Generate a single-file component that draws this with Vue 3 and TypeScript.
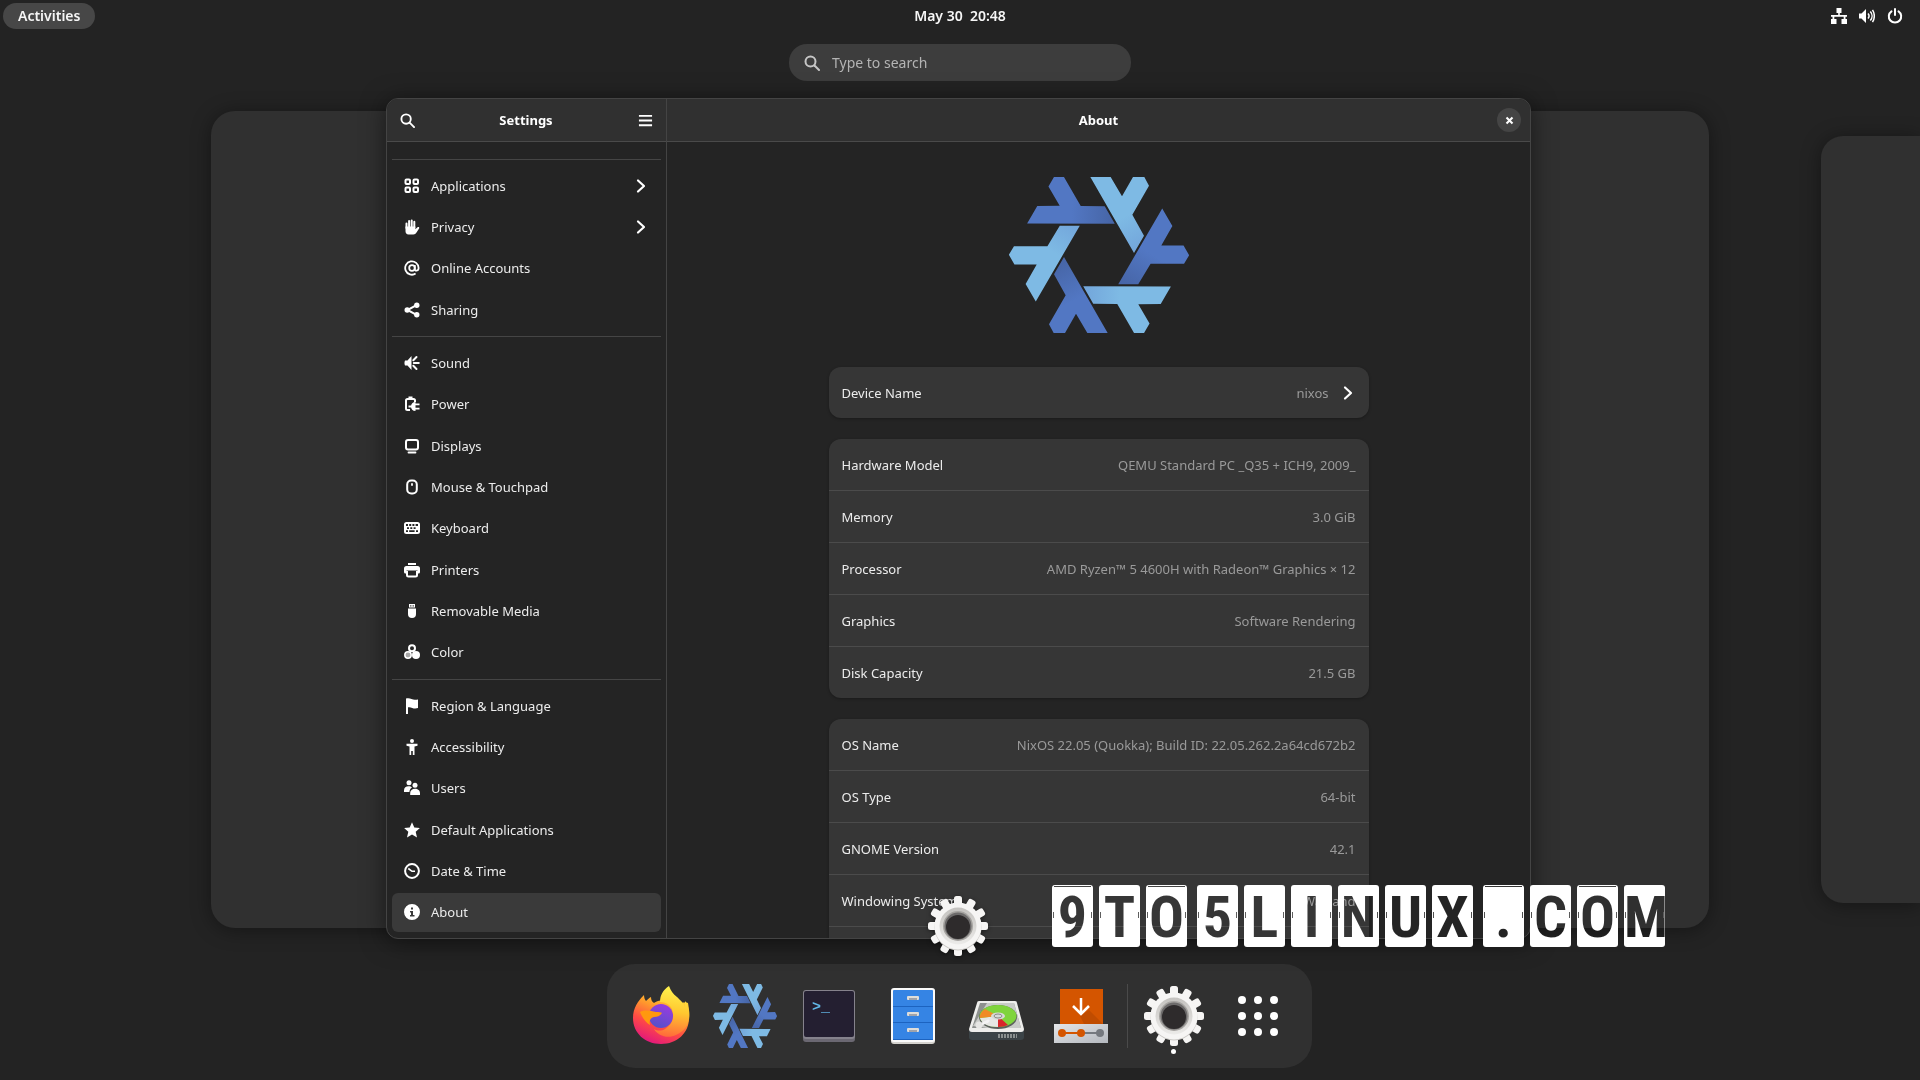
<script setup lang="ts">
import { ref } from 'vue'

interface NavItem {
  label: string
  icon: string
  sub?: boolean
}

interface InfoRow {
  label: string
  value: string
}

const icons: Record<string, string> = {
  search:
    '<circle cx="6.5" cy="6.5" r="5" fill="none" stroke="currentColor" stroke-width="2"/><path d="M10.5 10.5L15 15" stroke="currentColor" stroke-width="2" stroke-linecap="round"/>',
  menu: '<path d="M1 3h14M1 8h14M1 13h14" stroke="currentColor" stroke-width="2"/>',
  close: '<path d="M4.8 4.8l6.4 6.4M11.2 4.8l-6.4 6.4" stroke="currentColor" stroke-width="2.2"/>',
  chevron:
    '<path d="M5 2.5L11 8l-6 5.5" fill="none" stroke="currentColor" stroke-width="2.2" stroke-linecap="round" stroke-linejoin="round"/>',
  apps: '<g fill="none" stroke="currentColor" stroke-width="2"><rect x="1.5" y="1.5" width="4.5" height="4.5" rx="1"/><rect x="9.5" y="1.5" width="4.5" height="4.5" rx="1"/><rect x="1.5" y="9.5" width="4.5" height="4.5" rx="1"/><rect x="9.5" y="9.5" width="4.5" height="4.5" rx="1"/></g>',
  hand: '<path d="M2.5 9V4.5M5.1 9V2M7.7 9V1.5M10.3 9V2.8" stroke="currentColor" stroke-width="2" stroke-linecap="round"/><path d="M1.5 7.5h9.8v2.7l2.2-1.9c1-.8 2.3 0 1.6 1.2l-2.6 4c-.8 1.3-1.6 2-3.2 2H4.5c-1.9 0-3-1.3-3-3.2z" fill="currentColor"/>',
  at: '<circle cx="8" cy="8" r="2.8" fill="none" stroke="currentColor" stroke-width="1.8"/><path d="M10.8 5v4.2c0 2.2 3.8 2 3.8-1.2a6.7 6.7 0 1 0-3 5.6" fill="none" stroke="currentColor" stroke-width="1.8"/>',
  share:
    '<path d="M12.5 3.2L3.5 8l9 4.8" fill="none" stroke="currentColor" stroke-width="2"/><circle cx="12.8" cy="3.2" r="2.7" fill="currentColor"/><circle cx="3.2" cy="8" r="2.7" fill="currentColor"/><circle cx="12.8" cy="12.8" r="2.7" fill="currentColor"/>',
  sound:
    '<path d="M1 5.5h2.5L7.5 1v14l-4-4.5H1C.3 9 .3 7 1 5.5z" fill="currentColor"/><path d="M9.3 5.2l3.2-3.2M9.8 8h5M9.3 10.8l3.2 3.2" stroke="currentColor" stroke-width="2" stroke-linecap="round"/>',
  power:
    '<path d="M6 14H3.5C2.5 14 2 13.5 2 12.5v-8C2 3.5 2.5 3 3.5 3h6c1 0 1.5.5 1.5 1.5V6" fill="none" stroke="currentColor" stroke-width="2"/><path d="M4.5.5h4V3h-4zM4.5 9.6H8v1.8H4.5z" fill="currentColor"/><path d="M11.5 6v9C8.7 15 7 13 7 10.5S8.7 6 11.5 6zM11 7.5h4.5v1.8H11zM11 11.7h4.5v1.8H11z" fill="currentColor"/>',
  display:
    '<rect x="2" y="2" width="12" height="9.5" rx="2" fill="none" stroke="currentColor" stroke-width="2"/><path d="M4.5 14.5h7" stroke="currentColor" stroke-width="1.8" stroke-linecap="round"/>',
  mouse:
    '<rect x="3.2" y="1.5" width="9.6" height="13" rx="4" fill="none" stroke="currentColor" stroke-width="2"/><path d="M8 4.2v2.6" stroke="currentColor" stroke-width="1.8"/>',
  keyboard:
    '<path fill-rule="evenodd" fill="currentColor" d="M2.5 2h11A2.5 2.5 0 0 1 16 4.5v7a2.5 2.5 0 0 1-2.5 2.5h-11A2.5 2.5 0 0 1 0 11.5v-7A2.5 2.5 0 0 1 2.5 2zM2 4v2h2V4zM5.2 4v2h2V4zM8.4 4v2h2V4zM11.6 4v2h2.4V4zM3 7.2v1.8h2V7.2zM6.3 7.2v1.8h2V7.2zM9.6 7.2v1.8h2V7.2zM2 10.3V12h2v-1.7zM5.2 10.3V12h5.4v-1.7zM12 10.3V12h2v-1.7z"/>',
  printer:
    '<path d="M4 1h8v2H4zM2.5 4h11A2.5 2.5 0 0 1 16 6.5V10a1.5 1.5 0 0 1-1.5 1.5h-1V8.5h-11v3h-1A1.5 1.5 0 0 1 0 10V6.5A2.5 2.5 0 0 1 2.5 4z" fill="currentColor"/><path d="M3 9v4a1.5 1.5 0 0 0 1.5 1.5h7A1.5 1.5 0 0 0 13 13V9" fill="none" stroke="currentColor" stroke-width="2"/>',
  usb: '<path fill-rule="evenodd" d="M5 1h6v3.5H5zM6.2 2.2v1.2h1.2V2.2zM8.6 2.2v1.2h1.2V2.2z" fill="currentColor"/><path d="M4 5.5h8V11a4 4 0 0 1-8 0z" fill="currentColor"/>',
  color:
    '<circle cx="8" cy="4.2" r="3" fill="none" stroke="currentColor" stroke-width="2"/><circle cx="4" cy="11" r="3.2" fill="currentColor" fill-opacity=".6" stroke="currentColor" stroke-width="1.5"/><circle cx="12" cy="11" r="4" fill="currentColor"/>',
  flag: '<path d="M2 .5c2-.6 4-.3 5.5.6 2 .9 4 .9 6.5.3v8.7c-2 .7-4 .6-5.8-.2C6.8 9.2 5.5 9 4 9.3V16H2z" fill="currentColor"/>',
  access:
    '<circle cx="8" cy="2" r="2" fill="currentColor"/><path d="M2.5 4.8h11v2l-3 .6V16H8.8v-4H7.2v4H5.5V7.4l-3-.6z" fill="currentColor"/>',
  users:
    '<circle cx="5" cy="2.8" r="2.5" fill="currentColor"/><circle cx="11" cy="5.2" r="2.5" fill="currentColor"/><path d="M0 10.5C0 7.5 2 6.2 4.5 6.2c1.5 0 2.8.5 3.5 1.4C6.5 8.5 5.6 9.8 5.4 12H0zM6.2 15v-2c0-2.5 2-4.3 4.8-4.3S16 10.5 16 13v2z" fill="currentColor"/>',
  star: '<path d="M8 .3l2.3 5.2 5.6.5-4.2 3.8 1.3 5.7L8 12.5l-5 3 1.3-5.7L.1 6l5.6-.5z" fill="currentColor"/>',
  clock:
    '<circle cx="8" cy="8" r="6.9" fill="none" stroke="currentColor" stroke-width="2"/><path d="M4.3 5.5L8 8.3h3" fill="none" stroke="currentColor" stroke-width="1.6"/>',
  info: '<path fill-rule="evenodd" fill="currentColor" d="M8 0a8 8 0 1 1 0 16A8 8 0 0 1 8 0zM7 3.5v2h2v-2zM6 7v1.5h1V11H6v1.5h4.5V11H9V7z"/>',
  network:
    '<path d="M5.5 0h5v5h-5zM0 11h5.5v5H0zM10.5 11H16v5h-5.5zM7.2 5h1.6v2H16v1.8h-1.5V11h-1.8V8.8H3.3V11H1.5V8.8H0V7h7.2z" fill="currentColor"/>',
  volume:
    '<path d="M0 5.5h2.5L7 1v14l-4.5-4.5H0z" fill="currentColor"/><path d="M9 5.5c1.3 1.5 1.3 3.5 0 5M11.3 3.5c2.3 2.6 2.3 6.4 0 9M13.5 1.8c2.4 3.6 2.4 8.8 0 12.4" fill="none" stroke="currentColor" stroke-width="1.5"/>',
  shutdown:
    '<path d="M4.5 3.3a6.2 6.2 0 1 0 7 0" fill="none" stroke="currentColor" stroke-width="2" stroke-linecap="round"/><path d="M8 1v6" stroke="currentColor" stroke-width="2" stroke-linecap="round"/>'
}

const navGroups: NavItem[][] = [
  [
    { label: 'Applications', icon: 'apps', sub: true },
    { label: 'Privacy', icon: 'hand', sub: true },
    { label: 'Online Accounts', icon: 'at' },
    { label: 'Sharing', icon: 'share' }
  ],
  [
    { label: 'Sound', icon: 'sound' },
    { label: 'Power', icon: 'power' },
    { label: 'Displays', icon: 'display' },
    { label: 'Mouse & Touchpad', icon: 'mouse' },
    { label: 'Keyboard', icon: 'keyboard' },
    { label: 'Printers', icon: 'printer' },
    { label: 'Removable Media', icon: 'usb' },
    { label: 'Color', icon: 'color' }
  ],
  [
    { label: 'Region & Language', icon: 'flag' },
    { label: 'Accessibility', icon: 'access' },
    { label: 'Users', icon: 'users' },
    { label: 'Default Applications', icon: 'star' },
    { label: 'Date & Time', icon: 'clock' },
    { label: 'About', icon: 'info' }
  ]
]

const hardware: InfoRow[] = [
  { label: 'Hardware Model', value: 'QEMU Standard PC _Q35 + ICH9, 2009_' },
  { label: 'Memory', value: '3.0 GiB' },
  { label: 'Processor', value: 'AMD Ryzen™ 5 4600H with Radeon™ Graphics × 12' },
  { label: 'Graphics', value: 'Software Rendering' },
  { label: 'Disk Capacity', value: '21.5 GB' }
]

const system: InfoRow[] = [
  { label: 'OS Name', value: 'NixOS 22.05 (Quokka); Build ID: 22.05.262.2a64cd672b2' },
  { label: 'OS Type', value: '64-bit' },
  { label: 'GNOME Version', value: '42.1' },
  { label: 'Windowing System', value: 'Wayland' },
  { label: '', value: '' }
]

const siteWords: string[] = ['9TO', '5LINUX', '.COM']
const current = ref('About')
const query = ref('')
</script>

<template>
  <div class="shell">
    <svg class="sprite" aria-hidden="true">
      <defs>
        <linearGradient id="nixLight" gradientUnits="userSpaceOnUse" x1="30" y1="-200" x2="120" y2="-30">
          <stop offset="0.5" stop-color="#7ebae4" />
          <stop offset="1" stop-color="#74a8dc" />
        </linearGradient>
        <linearGradient id="nixDark" gradientUnits="userSpaceOnUse" x1="30" y1="-200" x2="120" y2="-30">
          <stop offset="0.4" stop-color="#5277c3" />
          <stop offset="1" stop-color="#4766a8" />
        </linearGradient>
        <linearGradient id="foxBody" x1="0.8" y1="0" x2="0.3" y2="1">
          <stop offset="0" stop-color="#ffdf3a" />
          <stop offset="0.35" stop-color="#ff9a2c" />
          <stop offset="0.65" stop-color="#ff4a45" />
          <stop offset="1" stop-color="#e0157f" />
        </linearGradient>
        <linearGradient id="foxFlame" x1="0.5" y1="0" x2="0.4" y2="1">
          <stop offset="0" stop-color="#fff44f" />
          <stop offset="0.5" stop-color="#ffc72f" />
          <stop offset="1" stop-color="#ff6a3a" />
        </linearGradient>
        <linearGradient id="foxGlobe" x1="0.7" y1="0" x2="0.3" y2="1">
          <stop offset="0" stop-color="#9a3be0" />
          <stop offset="1" stop-color="#5551c8" />
        </linearGradient>
        <linearGradient id="gearRing" x1="0" y1="0" x2="0" y2="1">
          <stop offset="0" stop-color="#c4c2bf" />
          <stop offset="1" stop-color="#ecebe9" />
        </linearGradient>
        <linearGradient id="silver" x1="0" y1="0" x2="1" y2="1">
          <stop offset="0" stop-color="#e4e6e9" />
          <stop offset="1" stop-color="#b4b8be" />
        </linearGradient>
        <symbol id="snowflake" viewBox="-270 -234 540 468" preserveAspectRatio="none">
          <polygon
            v-for="n in 6"
            :key="n"
            points="-26,-234 35,-234 69,-176 102,-234 136,-234 150,-208 100,-121 135,-58 105,-6"
            :fill="n % 2 ? 'url(#nixDark)' : 'url(#nixLight)'"
            :transform="`rotate(${n * 60})`"
          />
        </symbol>
        <symbol id="gear" viewBox="-32 -32 64 64">
          <rect
            v-for="n in 12"
            :key="n"
            x="-4"
            y="-30"
            width="8"
            height="12"
            rx="2.5"
            fill="#f6f5f4"
            :transform="`rotate(${n * 30})`"
          />
          <circle cy="1" r="23.5" fill="#c9c7c4" />
          <circle r="23.5" fill="#f6f5f4" />
          <circle r="18.5" fill="url(#gearRing)" />
          <circle r="15" fill="#a5a3a0" />
          <circle r="13.5" fill="#6d6b6b" />
          <circle cy="1" r="12" fill="#2e2b2c" />
        </symbol>
      </defs>
    </svg>

    <header class="topbar">
      <button class="activities" type="button">Activities</button>
      <time class="clock">May 30&nbsp; 20:48</time>
      <div class="tray">
        <svg v-for="name in ['network', 'volume', 'shutdown']" :key="name" class="icon" viewBox="0 0 16 16" v-html="icons[name]" />
      </div>
    </header>

    <label class="search">
      <svg class="icon" viewBox="0 0 16 16" v-html="icons.search" />
      <input v-model="query" type="text" placeholder="Type to search" aria-label="Type to search" />
    </label>

    <main class="stage">
      <div class="workspace"></div>
      <div class="workspace-next"></div>

      <section class="window">
        <aside class="sidebar">
          <header class="bar">
            <button type="button" aria-label="Search"><svg class="icon" viewBox="0 0 16 16" v-html="icons.search" /></button>
            <h2>Settings</h2>
            <button type="button" aria-label="Menu"><svg class="icon" viewBox="0 0 16 16" v-html="icons.menu" /></button>
          </header>
          <nav class="nav">
            <template v-for="(group, g) in navGroups" :key="g">
              <hr />
              <a
                v-for="item in group"
                :key="item.label"
                href="#"
                :class="{ active: current === item.label }"
                @click.prevent="current = item.label"
              >
                <svg class="icon" viewBox="0 0 16 16" v-html="icons[item.icon]" />
                <span>{{ item.label }}</span>
                <svg v-if="item.sub" class="icon" viewBox="0 0 16 16" v-html="icons.chevron" />
              </a>
            </template>
          </nav>
        </aside>

        <div class="pane">
          <header class="bar">
            <h1>About</h1>
            <button class="close" type="button" aria-label="Close"><svg class="icon" viewBox="0 0 16 16" v-html="icons.close" /></button>
          </header>
          <div class="about">
            <svg class="logo"><use href="#snowflake" /></svg>
            <button class="card device" type="button">
              <span>Device Name</span>
              <span class="value">nixos</span>
              <svg class="icon" viewBox="0 0 16 16" v-html="icons.chevron" />
            </button>
            <dl v-for="(rows, i) in [hardware, system]" :key="i" class="card">
              <div v-for="row in rows" :key="row.label" class="row">
                <dt>{{ row.label }}</dt>
                <dd class="value">{{ row.value }}</dd>
              </div>
            </dl>
          </div>
        </div>
      </section>

      <svg class="window-icon"><use href="#gear" /></svg>

      <div class="site">
        <div v-for="word in siteWords" :key="word" class="word">
          <span v-for="(ch, i) in word" :key="i" class="tile" :class="{ lined: '9O.'.includes(ch) }">{{ ch }}</span>
        </div>
      </div>
    </main>

    <footer class="dock">
      <button type="button" aria-label="Firefox">
        <svg viewBox="0 0 64 64">
          <path
            d="M15 11c0 3 1 5 2 6 2-2 3-3 5-4 0 3 1 5 3 6 3-2 6-3 9-2 3-2 9-1 13 3 5-1 9-2 12-1 1 5 1 9 1 15 0 15-12 26-28 26S4 49 4 34C4 24 9 17 15 11z"
            fill="url(#foxBody)"
          />
          <path
            d="M40 2c-6 4-9 9-9 16 6 0 10 3 12 7 3 8 0 16-7 20-3 2-8 2-11 0 4 7 14 10 22 6C57 47 62 37 60 26c-1-4-2-7-4-9v6c-2-5-5-7-8-10-4-3-6-6-8-11z"
            fill="url(#foxFlame)"
          />
          <circle cx="32" cy="32" r="12" fill="url(#foxGlobe)" />
          <path d="M11 28c5-3 11-1 16 0 3 0 5 0 6 1-2 3-5 4-8 4-4 1-5 4-4 8-5-3-8-8-10-13z" fill="#ff980e" />
        </svg>
      </button>
      <button type="button" aria-label="NixOS Manual"><svg><use href="#snowflake" /></svg></button>
      <button type="button" aria-label="Console">
        <svg viewBox="0 0 64 64">
          <rect x="6" y="9" width="52" height="49" rx="3" fill="#6b6872" />
          <rect x="6" y="6" width="52" height="49" rx="3" fill="#85828c" />
          <rect x="7" y="7" width="50" height="46" rx="2" fill="#241f31" />
          <text class="prompt" x="15" y="27">&gt;_</text>
        </svg>
      </button>
      <button type="button" aria-label="Files">
        <svg viewBox="0 0 64 64">
          <rect x="10" y="5" width="44" height="55" rx="3" fill="#d5d3cf" />
          <rect x="10" y="4" width="44" height="54" rx="3" fill="#fafafa" />
          <rect x="12" y="6" width="40" height="50" rx="1" fill="#3584e4" />
          <path d="M12 22.5h40M12 38.5h40M12 55.5h40" stroke="#1c63c0" />
          <g v-for="y in [12, 28, 44]" :key="y">
            <rect x="26" :y="y" width="12" height="4" rx="1" fill="#deddda" />
            <rect x="28" :y="y + 2" width="8" height="2" fill="#9fa3ab" />
          </g>
        </svg>
      </button>
      <button type="button" aria-label="GParted">
        <svg viewBox="0 0 64 64">
          <path d="M4 47h55v6q0 3-3 3H7q-3 0-3-3z" fill="#3b4347" />
          <path d="M14 17h36q2 0 2 2l7 26q0 3-3 3H7q-3 0-3-3l8-26q0-2 2-2z" fill="#eeeeec" />
          <path d="M15 19h34l7 25H7z" fill="#8d908e" />
          <path d="M22 19h27l7 25H22L8 42z" fill="#c9cbc8" />
          <ellipse cx="33" cy="33" rx="19" ry="12" fill="#5b605c" />
          <ellipse cx="33" cy="32" rx="18.5" ry="11" fill="#7fd43c" />
          <path d="M33 32l10 9q-4 2-10 2z" fill="#d8262b" />
          <path d="M33 32v11q-15 0-18-9z" fill="#e6e6e4" />
          <path d="M33 32l-18 2q-1-5 5-9z" fill="#f08a24" />
          <ellipse cx="33" cy="32" rx="7" ry="3.5" fill="#d9dbd8" />
          <ellipse cx="33" cy="32" rx="4" ry="2" fill="none" stroke="#888a85" />
          <path d="M13 42l10-5" stroke="#f4f4f4" stroke-width="3" stroke-linecap="round" />
          <circle cx="14" cy="41" r="3.5" fill="#e6e6e4" />
          <path d="M33 52h19" stroke="#8a9090" stroke-width="4" stroke-dasharray="2 1" />
        </svg>
      </button>
      <button type="button" aria-label="Install System">
        <svg viewBox="0 0 64 64">
          <path d="M11 5h43v36H11z" fill="#d45500" />
          <path d="M40 26l14 14H35l-4-8z" fill="#c04c00" />
          <path d="M32 14v16M24 22l8 8 8-8" fill="none" stroke="#fff" stroke-width="2.5" />
          <path d="M5 40h54v19H5z" fill="url(#silver)" />
          <path d="M32 49h19" stroke="#75797f" stroke-width="2" />
          <path d="M13 49h19" stroke="#d45500" stroke-width="2" />
          <circle cx="13" cy="49" r="4" fill="#d45500" />
          <circle cx="32" cy="49" r="4" fill="#d45500" />
          <circle cx="51" cy="49" r="4" fill="#75797f" />
        </svg>
      </button>
      <span class="divider"></span>
      <button class="running" type="button" aria-label="Settings"><svg><use href="#gear" /></svg></button>
      <button type="button" aria-label="Show Applications">
        <svg viewBox="0 0 64 64">
          <g v-for="y in [16, 32, 48]" :key="y" fill="#fff">
            <circle v-for="x in [16, 32, 48]" :key="x" :cx="x" :cy="y" r="4" />
          </g>
        </svg>
      </button>
    </footer>
  </div>
</template>

<style>
body {
  background: #232323;
}
</style>

<style scoped>
.shell {
  box-sizing: border-box;
  display: flex;
  flex-direction: column;
  align-items: center;
  height: 100vh;
  padding: 3px 0 12px;
  overflow: hidden;
  background: #232323;
  color: #ececec;
  font: 14px/20px 'Noto Sans', 'Open Sans', sans-serif;
}

.sprite {
  position: absolute;
  width: 0;
  height: 0;
}

button {
  padding: 0;
  border: 0;
  background: none;
  color: inherit;
  font: inherit;
}

.icon {
  display: block;
  flex: none;
  width: 16px;
  height: 16px;
  color: #fff;
}

.topbar {
  display: grid;
  grid-template-columns: 1fr auto 1fr;
  align-items: center;
  align-self: stretch;
  height: 26px;
  padding: 0 3px;
  color: #f6f6f6;
  font-weight: 600;
}

.activities {
  justify-self: start;
  height: 26px;
  padding: 0 15px;
  border-radius: 13px;
  background: #474747;
}

.tray {
  display: flex;
  justify-self: end;
  gap: 12px;
  padding-right: 14px;
}

.search {
  box-sizing: border-box;
  display: flex;
  align-items: center;
  gap: 12px;
  width: 342px;
  height: 37px;
  margin: 15px 0 17px;
  padding: 0 15px;
  border-radius: 18px;
  background: #3d3d3d;
}

.search .icon {
  color: #c6c6c6;
}

.search input {
  flex: 1;
  min-width: 0;
  padding: 0;
  border: 0;
  outline: 0;
  background: none;
  color: #fff;
  font: inherit;
}

.search input::placeholder {
  color: #b4b4b4;
  opacity: 1;
}

.stage {
  position: relative;
  display: grid;
  grid-template: minmax(0, 1fr) / minmax(0, 1fr);
  flex: 1;
  align-self: stretch;
  min-height: 0;
}

.workspace {
  grid-area: 1 / 1;
  margin: 13px 11% 11px;
  border-radius: 24px;
  background: #303030;
  box-shadow: 0 2px 20px rgba(0, 0, 0, 0.4);
}

.workspace-next {
  position: absolute;
  top: 38px;
  right: 0;
  bottom: 36px;
  width: 99px;
  border-radius: 22px 0 0 22px;
  background: #303030;
  box-shadow: 0 2px 20px rgba(0, 0, 0, 0.4);
}

.window {
  grid-area: 1 / 1;
  z-index: 1;
  box-sizing: border-box;
  display: grid;
  grid-template: minmax(0, 1fr) / 280px minmax(0, 1fr);
  min-height: 0;
  margin: 0 389px 0 386px;
  overflow: hidden;
  border: 1px solid #444;
  border-radius: 12px;
  background: #242424;
  box-shadow: 0 3px 24px rgba(0, 0, 0, 0.5);
}

.sidebar,
.pane {
  display: flex;
  flex-direction: column;
  min-height: 0;
  overflow: hidden;
  font-size: 13px;
}

.sidebar {
  border-right: 1px solid #444;
}

.bar {
  display: grid;
  grid-template-columns: 24px 1fr 24px;
  align-items: center;
  flex: none;
  height: 42px;
  padding: 0 9px;
  border-bottom: 1px solid #4a4a4a;
  background: #303030;
}

.sidebar .bar {
  padding: 0 9px 0 8px;
}

.bar button {
  display: grid;
  place-items: center;
  height: 24px;
}

.bar .icon {
  width: 15px;
  height: 15px;
}

.bar h1,
.bar h2 {
  grid-column: 2;
  margin: 0;
  color: #fff;
  font-size: 13px;
  font-weight: 700;
  text-align: center;
}

.bar .close {
  border-radius: 12px;
  background: #454545;
}

.nav {
  display: flex;
  flex-direction: column;
  flex: 1;
  min-height: 0;
  padding: 17px 5px 5px;
}

.nav hr {
  width: 100%;
  height: 1px;
  margin: 6px 0 5px;
  border: 0;
  background: #454545;
}

.nav hr:first-child {
  margin-top: 0;
}

.nav a {
  display: flex;
  align-items: center;
  flex: 1;
  gap: 11px;
  margin: 1px 0;
  padding: 0 12px;
  border-radius: 6px;
  color: inherit;
  text-decoration: none;
}

.nav a.active {
  background: #3a3a3a;
}

.nav span {
  flex: 1;
}

.about {
  display: flex;
  flex-direction: column;
  align-items: center;
  gap: 21px;
  padding: 35px 20px 0;
}

.logo {
  flex: none;
  width: 180px;
  height: 156px;
  margin-bottom: 13px;
}

.card {
  box-sizing: border-box;
  flex: none;
  width: 100%;
  max-width: 540px;
  margin: 0;
  border-radius: 12px;
  background: #363636;
  box-shadow: 0 1px 3px rgba(0, 0, 0, 0.3);
}

.device,
.row {
  display: flex;
  align-items: center;
  gap: 11px;
  height: 51px;
  padding: 0 13px;
}

.row + .row {
  border-top: 1px solid #4b4b4b;
}

.value {
  margin: 0 0 0 auto;
  color: #9a9a9a;
}

.window-icon {
  position: absolute;
  bottom: -19px;
  left: calc(50% - 34px);
  z-index: 2;
  width: 64px;
  height: 64px;
  filter: drop-shadow(0 1px 2px rgba(0, 0, 0, 0.5));
}

.site {
  position: absolute;
  right: 255px;
  bottom: -8px;
  z-index: 3;
  display: flex;
  gap: 10px;
  mix-blend-mode: screen;
}

.word {
  display: flex;
  gap: 6px;
}

.tile {
  position: relative;
  width: 41px;
  height: 62px;
  border-radius: 3px;
  background: #fff;
  color: #000;
  font: 700 58px/64px 'Liberation Sans Narrow', 'Roboto Condensed', 'Open Sans Condensed', 'DejaVu Sans Condensed', sans-serif;
  text-align: center;
}

.tile.lined {
  background: linear-gradient(#111, #111) 2px 1px / 37px 1px no-repeat #fff;
}

.tile::before,
.tile::after {
  content: '';
  position: absolute;
  top: 27px;
  left: 1px;
  width: 1px;
  height: 6px;
  background: #333;
}

.tile::after {
  right: 1px;
  left: auto;
}

.dock {
  display: flex;
  align-items: center;
  flex: none;
  height: 104px;
  margin: 25px 2px 0 0;
  padding: 0 12px;
  border-radius: 28px;
  background: #303030;
}

.dock button {
  position: relative;
  width: 84px;
  height: 64px;
}

.dock svg {
  display: block;
  width: 64px;
  height: 64px;
  margin: 0 auto;
}

.prompt {
  fill: #62b8e8;
  font: 700 15px 'Liberation Mono', monospace;
}

.divider {
  width: 1px;
  height: 64px;
  margin: 0 4px;
  background: #4a4a4a;
}

.running::after {
  content: '';
  position: absolute;
  bottom: -6px;
  left: 39px;
  width: 5px;
  height: 5px;
  border-radius: 50%;
  background: #fff;
}
</style>
